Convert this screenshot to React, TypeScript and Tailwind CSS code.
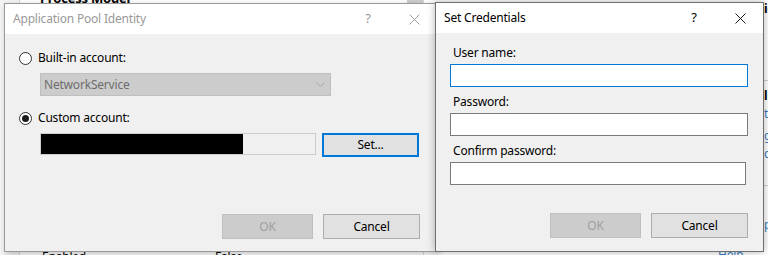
import React from "react";

const font = { fontFamily: '"Segoe UI", "Noto Sans", "Liberation Sans", sans-serif' };

function CloseIcon({ color }: { color: string }) {
  return (
    <svg width="11" height="11" viewBox="0 0 11 11">
      <path d="M0.5 0.5 L10.5 10.5 M10.5 0.5 L0.5 10.5" stroke={color} strokeWidth="1" fill="none" />
    </svg>
  );
}

function Radio({ checked }: { checked?: boolean }) {
  return (
    <span className="w-[13px] h-[13px] rounded-full border border-[#333] bg-white flex items-center justify-center shrink-0">
      {checked && <span className="w-[7px] h-[7px] rounded-full bg-[#1a1a1a]" />}
    </span>
  );
}

function Button({ label, disabled, focused }: { label: string; disabled?: boolean; focused?: boolean }) {
  const cls = disabled
    ? "bg-[#cccccc] border border-[#bfbfbf] text-[#a0a0a0]"
    : focused
    ? "bg-[#e1e1e1] border-2 border-[#0078d7] text-black"
    : "bg-[#e1e1e1] border border-[#adadad] text-black";
  return <div className={`h-full w-full flex items-center justify-center text-[12px] ${cls}`}>{label}</div>;
}

function TitleBar({ title, active }: { title: string; active?: boolean }) {
  const color = active ? "text-black" : "text-[#999999]";
  return (
    <div className="h-[30px] bg-white flex items-center pl-[8px] shrink-0">
      <span className={`text-[12px] ${color}`}>{title}</span>
      <span className={`ml-auto w-[46px] text-center text-[13px] ${color}`}>?</span>
      <span className="w-[46px] flex justify-center">
        <CloseIcon color={active ? "#1a1a1a" : "#a0a0a0"} />
      </span>
    </div>
  );
}

function Background() {
  return (
    <div className="absolute inset-0 bg-white">
      {/* IIS manager peeking out behind the dialogs */}
      <div className="absolute left-0 top-0 w-[20px] h-full bg-[#f3f3f3] border-r border-[#d9d9d9]" />
      <div className="absolute left-[40px] -top-[11px] text-[13px] font-bold text-black">Process Model</div>
      <div className="absolute left-[407px] top-0 w-[16px] h-[4px] bg-[#cdcdcd]" />
      <div className="absolute left-[423px] top-0 w-px h-full bg-[#dadada]" />
      <div className="absolute left-[14px] top-[251px] w-[740px] h-px bg-[#d0d0d0]" />
      <div className="absolute left-[42px] top-[251px] text-[12px] text-black leading-none">Enabled</div>
      <div className="absolute left-[215px] top-[251px] text-[12px] text-black leading-none">False</div>
      <div className="absolute left-[764px] top-[80px] w-[4px] h-px bg-[#d0d0d0]" />
      <div className="absolute left-[764px] top-[185px] w-[4px] h-px bg-[#d0d0d0]" />
      <div className="absolute left-[764px] top-[0px] text-[12px] font-bold">io</div>
      <div className="absolute left-[764px] top-[87px] text-[12px] font-bold">li</div>
      <div className="absolute left-[764px] top-[105px] text-[12px] text-[#3a7fc1]">t</div>
      <div className="absolute left-[764px] top-[127px] text-[12px] text-[#3a7fc1]">g</div>
      <div className="absolute left-[764px] top-[145px] text-[12px] text-[#3a7fc1]">c</div>
      <div className="absolute left-[764px] top-[216px] text-[12px] text-[#3a7fc1]">p</div>
      <div className="absolute left-[718px] top-[246px] text-[12px] text-[#3a7fc1]">Help</div>
    </div>
  );
}

function PoolIdentityDialog() {
  return (
    <div className="absolute left-[4px] top-[3px] w-[434px] h-[249px] border border-[#9a9a9a] bg-[#f0f0f0] flex flex-col shadow-[2px_2px_6px_rgba(0,0,0,0.25)]">
      <TitleBar title="Application Pool Identity" />
      <div className="flex flex-col pl-[14px] pt-[16px]">
        <div className="flex items-center gap-[6px] h-[16px]">
          <Radio />
          <span className="text-[12px] text-black">Built-in account:</span>
        </div>
        <div className="ml-[21px] mt-[7px] w-[291px] h-[23px] bg-[#cccccc] border border-[#bfbfbf] flex items-center pl-[3px]">
          <span className="text-[12px] text-[#6d6d6d]">NetworkService</span>
          <svg className="ml-auto mr-[5px]" width="9" height="5" viewBox="0 0 9 5">
            <path d="M0.5 0.5 L4.5 4.5 L8.5 0.5" stroke="#a8a8a8" fill="none" />
          </svg>
        </div>
        <div className="flex items-center gap-[6px] h-[16px] mt-[14px]">
          <Radio checked />
          <span className="text-[12px] text-black">Custom account:</span>
        </div>
        <div className="flex items-start ml-[21px] mt-[7px]">
          <div className="w-[276px] h-[22px] border border-[#cccccc] bg-[#f0f0f0]">
            <div className="w-[202px] h-full bg-black" />
          </div>
          <div className="ml-[6px] w-[97px] h-[24px]">
            <Button label="Set..." focused />
          </div>
        </div>
        <div className="flex ml-[203px] mt-[57px] gap-[10px]">
          <div className="w-[91px] h-[25px]">
            <Button label="OK" disabled />
          </div>
          <div className="w-[97px] h-[25px]">
            <Button label="Cancel" />
          </div>
        </div>
      </div>
    </div>
  );
}

function Field({ label, focused, width, first }: { label: string; focused?: boolean; width: string; first?: boolean }) {
  return (
    <div className={`flex flex-col ${first ? "" : "mt-[7px]"}`}>
      <span className="text-[12px] text-black h-[16px] leading-[16px] pl-[3px]">{label}</span>
      <div className={`mt-[3px] h-[23px] bg-white ${width} border ${focused ? "border-[#0078d7]" : "border-[#7a7a7a]"}`} />
    </div>
  );
}

function CredentialsDialog() {
  return (
    <div className="absolute left-[435px] top-[2px] w-[329px] h-[250px] border border-[#6f6f6f] bg-[#f0f0f0] flex flex-col shadow-[0_0_8px_rgba(0,0,0,0.3)]">
      <TitleBar title="Set Credentials" active />
      <div className="flex flex-col pl-[14px] pt-[12px]">
        <Field label="User name:" focused width="w-[298px]" first />
        <Field label="Password:" width="w-[298px]" />
        <Field label="Confirm password:" width="w-[296px]" />
        <div className="flex ml-[100px] mt-[28px] gap-[10px]">
          <div className="w-[91px] h-[25px]">
            <Button label="OK" disabled />
          </div>
          <div className="w-[97px] h-[25px]">
            <Button label="Cancel" />
          </div>
        </div>
      </div>
    </div>
  );
}

export default function App() {
  return (
    <div className="relative w-[768px] h-[255px] overflow-hidden tracking-[-0.2px]" style={font}>
      <Background />
      <PoolIdentityDialog />
      <CredentialsDialog />
    </div>
  );
}
